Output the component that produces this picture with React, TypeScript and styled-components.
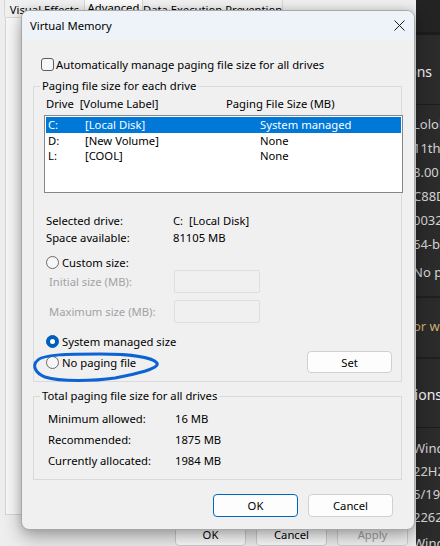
import React from "react";
import styled, { createGlobalStyle } from "styled-components";

const GlobalStyle = createGlobalStyle`
  html, body { margin: 0; padding: 0; }
  body { background: #202020; font-family: "Noto Sans", "Liberation Sans", sans-serif; }
  * { box-sizing: border-box; }
`;

const UI_FONT = `"Noto Sans", "Liberation Sans", sans-serif`;

const Desktop = styled.div`
  position: relative;
  width: 440px;
  height: 546px;
  overflow: hidden;
  background: #202020;
`;

/* ---------- dark Settings window (behind) ---------- */
const SettingsWindow = styled.div`
  position: absolute;
  left: 330px;
  top: 0;
  width: 330px;
  height: 546px;
  background: #202020;
  display: flex;
  flex-direction: column;
  font-family: ${UI_FONT};
  font-size: 13px;
  color: #d4d4d4;
`;

const Band = styled.div<{ $h: number; $bg: string }>`
  flex: 0 0 ${(p) => p.$h}px;
  background: ${(p) => p.$bg};
`;

const Card = styled.div<{ $h: number; $pt?: number }>`
  flex: 0 0 ${(p) => p.$h}px;
  background: #2b2b2b;
  padding: ${(p) => p.$pt ?? 0}px 0 0 12px;
  display: flex;
  flex-direction: column;
`;

const HeaderCard = styled.div<{ $h: number; $end: number }>`
  flex: 0 0 ${(p) => p.$h}px;
  background: #2b2b2b;
  padding-left: 12px;
  display: flex;
  align-items: center;
  & > span {
    width: ${(p) => p.$end}px;
    display: flex;
    justify-content: flex-end;
    white-space: nowrap;
    color: #f2f2f2;
    font-size: 14px;
    padding-top: 3px;
  }
`;

const SpecRow = styled.div<{ $h: number; $mt?: number }>`
  display: grid;
  grid-template-columns: 71px 1fr;
  align-items: center;
  height: ${(p) => p.$h}px;
  margin-top: ${(p) => p.$mt ?? 0}px;
  white-space: nowrap;
  & > span:first-child {
    overflow: hidden;
  }
`;

const LinkText = styled.span`
  color: #cfae6e;
  white-space: nowrap;
`;

/* ---------- Performance Options window (middle) ---------- */
const PerfWindow = styled.div`
  position: absolute;
  left: 0;
  top: 0;
  width: 416px;
  height: 546px;
  background: #eeeeee;
  display: flex;
  flex-direction: column;
  font-family: ${UI_FONT};
  font-size: 11.25px;
  color: #000;
`;

const TabRow = styled.div`
  display: flex;
  align-items: flex-end;
  margin-top: -4px;
  height: 21px;
  padding-left: 5px;
`;

const Tab = styled.div<{ $w: number; $active?: boolean }>`
  flex: 0 0 ${(p) => p.$w}px;
  height: ${(p) => (p.$active ? 21 : 19)}px;
  display: flex;
  align-items: center;
  justify-content: center;
  padding-top: ${(p) => (p.$active ? 0 : 2)}px;
  border: 1px solid #d6d6d6;
  border-bottom: none;
  margin-left: -1px;
  background: ${(p) => (p.$active ? "#f9f9f9" : "#f0f0f0")};
  white-space: nowrap;
`;

const TabPanel = styled.div`
  margin: 0 5px;
  height: 505px;
  border: 1px solid #d6d6d6;
  background: #f7f7f7;
`;

const PerfButtons = styled.div`
  display: flex;
  justify-content: flex-end;
  gap: 10px;
  padding-right: 8px;
  margin-top: 8px;
`;

const WinButton = styled.button<{ $disabled?: boolean }>`
  width: 71px;
  height: 23px;
  border: 1px solid #d0d0d0;
  border-radius: 4px;
  background: ${(p) => (p.$disabled ? "#f5f5f5" : "#fdfdfd")};
  color: ${(p) => (p.$disabled ? "#a0a0a0" : "#000")};
  font-family: ${UI_FONT};
  font-size: 11.25px;
  padding: 0;
`;

/* ---------- Virtual Memory dialog (top) ---------- */
const Dialog = styled.div`
  position: absolute;
  left: 21px;
  top: 10px;
  width: 394px;
  border: 1px solid #a8a8a8;
  border-radius: 8px;
  background: #f0f0f0;
  overflow: hidden;
  box-shadow: 0 8px 18px rgba(0, 0, 0, 0.3), 0 0 8px rgba(0, 0, 0, 0.15);
  font-family: ${UI_FONT};
  font-size: 11.25px;
  color: #000;
`;

const TitleBar = styled.div`
  height: 29px;
  background: #eef3f9;
  display: flex;
  align-items: center;
  justify-content: space-between;
  padding: 0 9px 0 8px;
`;

const Body = styled.div`
  display: flex;
  flex-direction: column;
  padding: 16px 12px 12px 11px;
`;

const CheckRow = styled.label`
  display: flex;
  align-items: center;
  gap: 2px;
  height: 16px;
  padding-left: 8px;
`;

const CheckBox = styled.span`
  width: 13px;
  height: 13px;
  border: 1px solid #5b5b5b;
  border-radius: 3px;
  background: #f7f7f7;
`;

const Group = styled.fieldset<{ $mt: number; $pt: number; $pb: number }>`
  margin: ${(p) => p.$mt}px 0 0 0;
  padding: ${(p) => p.$pt}px 0 ${(p) => p.$pb}px 0;
  width: 369px;
  min-width: 0;
  border: 1px solid #dadada;
  display: flex;
  flex-direction: column;
`;

const Legend = styled.legend`
  margin-left: 6px;
  padding: 0 2px;
  line-height: 16px;
  font-size: 11.25px;
`;

const ListHeader = styled.div`
  display: grid;
  grid-template-columns: 180px 1fr;
  height: 16px;
  align-items: center;
  padding-left: 12px;
  white-space: pre;
`;

const ListBox = styled.div`
  margin: 4px 0 0 10px;
  width: 359px;
  height: 78px;
  border: 1px solid #828790;
  background: #ffffff;
  padding: 1px;
`;

const ListRow = styled.div<{ $selected?: boolean }>`
  display: grid;
  grid-template-columns: 37px 175px 1fr;
  height: 15.5px;
  align-items: center;
  padding-left: 2px;
  background: ${(p) => (p.$selected ? "#0078d7" : "transparent")};
  color: ${(p) => (p.$selected ? "#ffffff" : "#000")};
  white-space: nowrap;
`;

const InfoRow = styled.div<{ $mt?: number; $left: number; $col: number; $h: number }>`
  display: grid;
  grid-template-columns: ${(p) => p.$col}px 1fr;
  height: ${(p) => p.$h}px;
  align-items: center;
  padding-left: ${(p) => p.$left}px;
  margin-top: ${(p) => p.$mt ?? 0}px;
  white-space: pre;
`;

const RadioRow = styled.label<{ $mt: number }>`
  display: flex;
  align-items: center;
  gap: 3px;
  height: 16px;
  padding-left: 12px;
  margin-top: ${(p) => p.$mt}px;
`;

const Radio = styled.span<{ $checked?: boolean }>`
  width: 13px;
  height: 13px;
  border-radius: 50%;
  border: 1px solid ${(p) => (p.$checked ? "#005fb8" : "#6a6a6a")};
  background: ${(p) => (p.$checked ? "#005fb8" : "#f7f7f7")};
  display: flex;
  align-items: center;
  justify-content: center;
  &::after {
    content: "";
    display: ${(p) => (p.$checked ? "block" : "none")};
    width: 5px;
    height: 5px;
    border-radius: 50%;
    background: #ffffff;
  }
`;

const SizeRow = styled.div<{ $mt: number }>`
  display: grid;
  grid-template-columns: 125px 86px;
  height: 23px;
  align-items: center;
  padding-left: 15px;
  margin-top: ${(p) => p.$mt}px;
  color: #a2a2a2;
`;

const SizeInput = styled.div`
  height: 23px;
  border: 1px solid #dedede;
  border-radius: 2px;
  background: #f0f0f0;
`;

const SetRow = styled.div`
  display: flex;
  align-items: center;
  justify-content: space-between;
  height: 22px;
  margin-top: 2px;
  padding: 0 9px 0 12px;
`;

const RadioLabel = styled.span`
  display: flex;
  align-items: center;
  gap: 3px;
`;

const DialogButton = styled.button<{ $primary?: boolean; $h: number }>`
  width: 85px;
  height: ${(p) => p.$h}px;
  border: 1px solid ${(p) => (p.$primary ? "#0067c0" : "#d0d0d0")};
  border-radius: 4px;
  background: #fdfdfd;
  color: #000;
  font-family: ${UI_FONT};
  font-size: 11.25px;
  padding: 0;
`;

const DialogButtons = styled.div`
  display: flex;
  justify-content: flex-end;
  gap: 10px;
  margin-top: 14px;
  padding-right: 9px;
`;

const Scribble = styled.svg`
  position: absolute;
  left: 0;
  top: 0;
  width: 394px;
  height: 520px;
  pointer-events: none;
  overflow: visible;
`;

const CloseIcon = () => (
  <svg width="11" height="11" viewBox="0 0 11 11">
    <path d="M0.5 0.5 L10.5 10.5 M10.5 0.5 L0.5 10.5" stroke="#1b1b1b" strokeWidth="1" fill="none" />
  </svg>
);

const specs = [
  ["Device name", "Lololol-PC"],
  ["Processor", "11th Gen Intel(R) Core(TM) i7"],
  ["Installed RAM", "8.00 GB"],
  ["Device ID", "C88D1E52-7A41-4B"],
  ["Product ID", "00325-80000-00000"],
  ["System type", "64-bit operating system"],
];

const winSpecs = [
  ["Edition", "Windows 11 Pro"],
  ["Version", "22H2"],
  ["Installed on", "5/19/2022"],
  ["OS build", "22621.1702"],
];

const drives = [
  { d: "C:", label: "[Local Disk]", size: "System managed", sel: true },
  { d: "D:", label: "[New Volume]", size: "None" },
  { d: "L:", label: "[COOL]", size: "None" },
];

export default function App() {
  return (
    <Desktop>
      <GlobalStyle />
      <SettingsWindow>
        <Band $h={32} $bg="#232323" />
        <Band $h={3} $bg="#1c1c1c" />
        <HeaderCard $h={69} $end={90}>
          <span>Device specifications</span>
        </HeaderCard>
        <Band $h={1} $bg="#1d1d1d" />
        <Card $h={191} $pt={7}>
          {specs.map(([k, v]) => (
            <SpecRow key={k} $h={24}>
              <span>{k}</span>
              <span>{v}</span>
            </SpecRow>
          ))}
          <SpecRow $h={24} $mt={4}>
            <span>Pen and touch</span>
            <span>No pen or touch input</span>
          </SpecRow>
        </Card>
        <Band $h={2} $bg="#202020" />
        <Card $h={59} $pt={0}>
          <SpecRow $h={56}>
            <span>Related links</span>
            <LinkText>or workgroup</LinkText>
          </SpecRow>
        </Card>
        <Band $h={2} $bg="#202020" />
        <HeaderCard $h={68} $end={100}>
          <span>Windows specifications</span>
        </HeaderCard>
        <Band $h={1} $bg="#1d1d1d" />
        <Card $h={120} $pt={8}>
          {winSpecs.map(([k, v]) => (
            <SpecRow key={k} $h={23}>
              <span>{k}</span>
              <span>{v}</span>
            </SpecRow>
          ))}
          <SpecRow $h={23} $mt={3}>
            <span>Experience</span>
            <span>Windows Feature Experience Pack</span>
          </SpecRow>
        </Card>
      </SettingsWindow>

      <PerfWindow>
        <TabRow>
          <Tab $w={81}>Visual Effects</Tab>
          <Tab $w={59} $active>
            Advanced
          </Tab>
          <Tab $w={137}>Data Execution Prevention</Tab>
        </TabRow>
        <TabPanel />
        <PerfButtons>
          <WinButton>OK</WinButton>
          <WinButton>Cancel</WinButton>
          <WinButton $disabled>Apply</WinButton>
        </PerfButtons>
      </PerfWindow>

      <Dialog>
        <TitleBar>
          <span>Virtual Memory</span>
          <CloseIcon />
        </TitleBar>
        <Body>
          <CheckRow>
            <CheckBox />
            <span>Automatically manage paging file size for all drives</span>
          </CheckRow>

          <Group $mt={6} $pt={1} $pb={8}>
            <Legend>Paging file size for each drive</Legend>
            <ListHeader>
              <span>Drive  [Volume Label]</span>
              <span>Paging File Size (MB)</span>
            </ListHeader>
            <ListBox>
              {drives.map((r) => (
                <ListRow key={r.d} $selected={r.sel}>
                  <span>{r.d}</span>
                  <span>{r.label}</span>
                  <span>{r.size}</span>
                </ListRow>
              ))}
            </ListBox>
            <InfoRow $mt={19} $left={12} $col={127} $h={17}>
              <span>Selected drive:</span>
              <span>C:  [Local Disk]</span>
            </InfoRow>
            <InfoRow $left={12} $col={127} $h={17}>
              <span>Space available:</span>
              <span>81105 MB</span>
            </InfoRow>
            <RadioRow $mt={8}>
              <Radio />
              <span>Custom size:</span>
            </RadioRow>
            <SizeRow $mt={0}>
              <span>Initial size (MB):</span>
              <SizeInput />
            </SizeRow>
            <SizeRow $mt={7}>
              <span>Maximum size (MB):</span>
              <SizeInput />
            </SizeRow>
            <RadioRow $mt={10}>
              <Radio $checked />
              <span>System managed size</span>
            </RadioRow>
            <SetRow>
              <RadioLabel>
                <Radio />
                <span>No paging file</span>
              </RadioLabel>
              <DialogButton $h={22}>Set</DialogButton>
            </SetRow>
          </Group>

          <Group $mt={6} $pt={6} $pb={11}>
            <Legend>Total paging file size for all drives</Legend>
            <InfoRow $left={14} $col={127} $h={16}>
              <span>Minimum allowed:</span>
              <span>16 MB</span>
            </InfoRow>
            <InfoRow $mt={5} $left={14} $col={127} $h={16}>
              <span>Recommended:</span>
              <span>1875 MB</span>
            </InfoRow>
            <InfoRow $mt={5} $left={14} $col={127} $h={16}>
              <span>Currently allocated:</span>
              <span>1984 MB</span>
            </InfoRow>
          </Group>

          <DialogButtons>
            <DialogButton $primary $h={23}>
              OK
            </DialogButton>
            <DialogButton $h={23}>Cancel</DialogButton>
          </DialogButtons>
        </Body>
        <Scribble viewBox="0 0 394 520">
          <path
            d="M 15 350 C 20 343, 48 343, 78 343 C 106 343, 130 346, 135 352 C 138 358, 113 363, 93 367 C 73 370, 38 371, 23 366 C 13 362, 11 355, 14 351"
            stroke="#0d63d4"
            strokeWidth="3"
            strokeLinecap="round"
            strokeLinejoin="round"
            fill="none"
          />
        </Scribble>
      </Dialog>
    </Desktop>
  );
}
